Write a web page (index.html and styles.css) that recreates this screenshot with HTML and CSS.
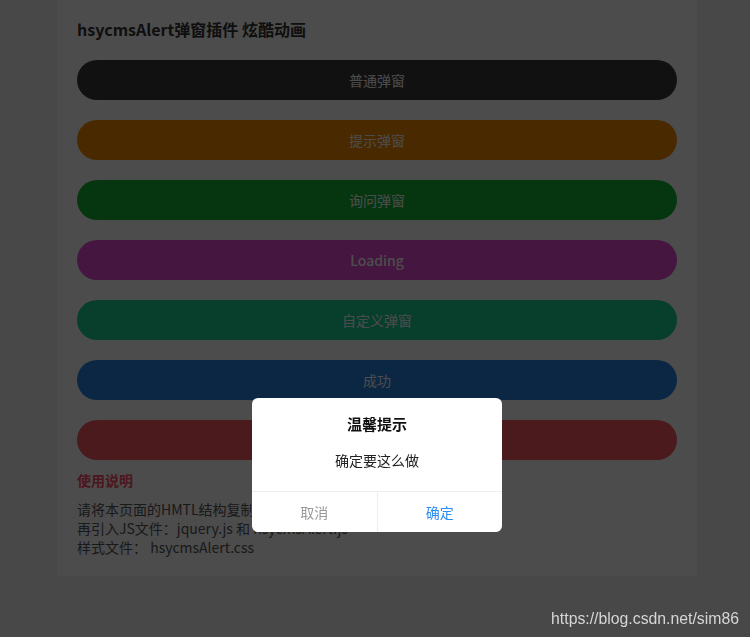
FILE: index.html
```html
<!DOCTYPE html>
<html lang="zh-CN">
<head>
<meta charset="utf-8">
<title>hsycmsAlert弹窗插件 炫酷动画</title>
<link rel="stylesheet" href="styles.css">
</head>
<body>
<div class="page">
  <h1 class="title">hsycmsAlert弹窗插件 炫酷动画</h1>
  <div class="btn-list">
    <button class="btn btn-default">普通弹窗</button>
    <button class="btn btn-warn">提示弹窗</button>
    <button class="btn btn-confirm">询问弹窗</button>
    <button class="btn btn-loading">Loading</button>
    <button class="btn btn-custom">自定义弹窗</button>
    <button class="btn btn-success">成功</button>
    <button class="btn btn-error">失败</button>
  </div>
  <h2 class="usage-title">使用说明</h2>
  <p class="usage">请将本页面的HMTL结构复制到页面中<br>再引入JS文件：jquery.js 和 hsycmsAlert.js<br>样式文件： hsycmsAlert.css</p>
</div>

<div class="mask"></div>
<div class="dialog">
  <div class="dialog-title">温馨提示</div>
  <div class="dialog-msg">确定要这么做</div>
  <div class="dialog-actions">
    <div class="dialog-btn cancel">取消</div>
    <div class="dialog-btn ok">确定</div>
  </div>
</div>

<div class="watermark">https://blog.csdn.net/sim86</div>
</body>
</html>
```

FILE: styles.css
```css
html, body {
  margin: 0;
  padding: 0;
  height: 100%;
}
body {
  background: #f2f2f2;
  font-family: "Noto Sans CJK SC", "Noto Sans", sans-serif;
  color: #333;
  overflow: hidden;
}
.page {
  width: 600px;
  margin-left: 57px;
  padding: 20px 20px 19px;
  background: #fff;
}
.title {
  margin: 0 0 22px;
  font-size: 16px;
  line-height: 18px;
  font-weight: bold;
  color: #333;
}
.btn-list {
  display: flex;
  flex-direction: column;
  gap: 20px;
}
.btn {
  display: block;
  width: 100%;
  height: 40px;
  border: 0;
  border-radius: 20px;
  color: #fff;
  font-family: inherit;
  font-size: 14px;
  padding: 0;
}
.btn-loading { font-weight: 500; }
.btn-default { background: #3a3a3a; }
.btn-warn { background: #f68a00; }
.btn-confirm { background: #16b636; }
.btn-loading { background: #e84ad6; }
.btn-custom { background: #18d094; }
.btn-success { background: #2884e0; }
.btn-error { background: #f8585f; }

.usage-title {
  margin: 10px 0 10px;
  font-size: 14px;
  line-height: 20px;
  font-weight: bold;
  color: #ff4a64;
}
.usage {
  margin: 0;
  font-size: 14px;
  line-height: 19px;
  color: #555;
}

.mask {
  position: fixed;
  inset: 0;
  background: rgba(0, 0, 0, 0.7);
}
.dialog {
  position: fixed;
  left: 252px;
  top: 398px;
  width: 250px;
  background: #fff;
  border-radius: 6px;
  overflow: hidden;
  text-align: center;
}
.dialog-title {
  padding-top: 16px;
  font-size: 15px;
  line-height: 20px;
  font-weight: bold;
  color: #111;
}
.dialog-msg {
  margin-top: 16px;
  font-size: 14px;
  line-height: 20px;
  color: #222;
}
.dialog-actions {
  margin-top: 21px;
  display: flex;
  border-top: 1px solid #eee;
}
.dialog-btn {
  flex: 1;
  height: 40px;
  line-height: 40px;
  font-size: 14px;
}
.dialog-btn.cancel { color: #999; }
.dialog-btn.ok {
  color: #2d8cf0;
  border-left: 1px solid #eee;
}
.watermark {
  position: fixed;
  right: 11px;
  bottom: 9px;
  font-family: "Liberation Sans", Arial, sans-serif;
  font-size: 15.8px;
  color: #d6d6d6;
}
```
